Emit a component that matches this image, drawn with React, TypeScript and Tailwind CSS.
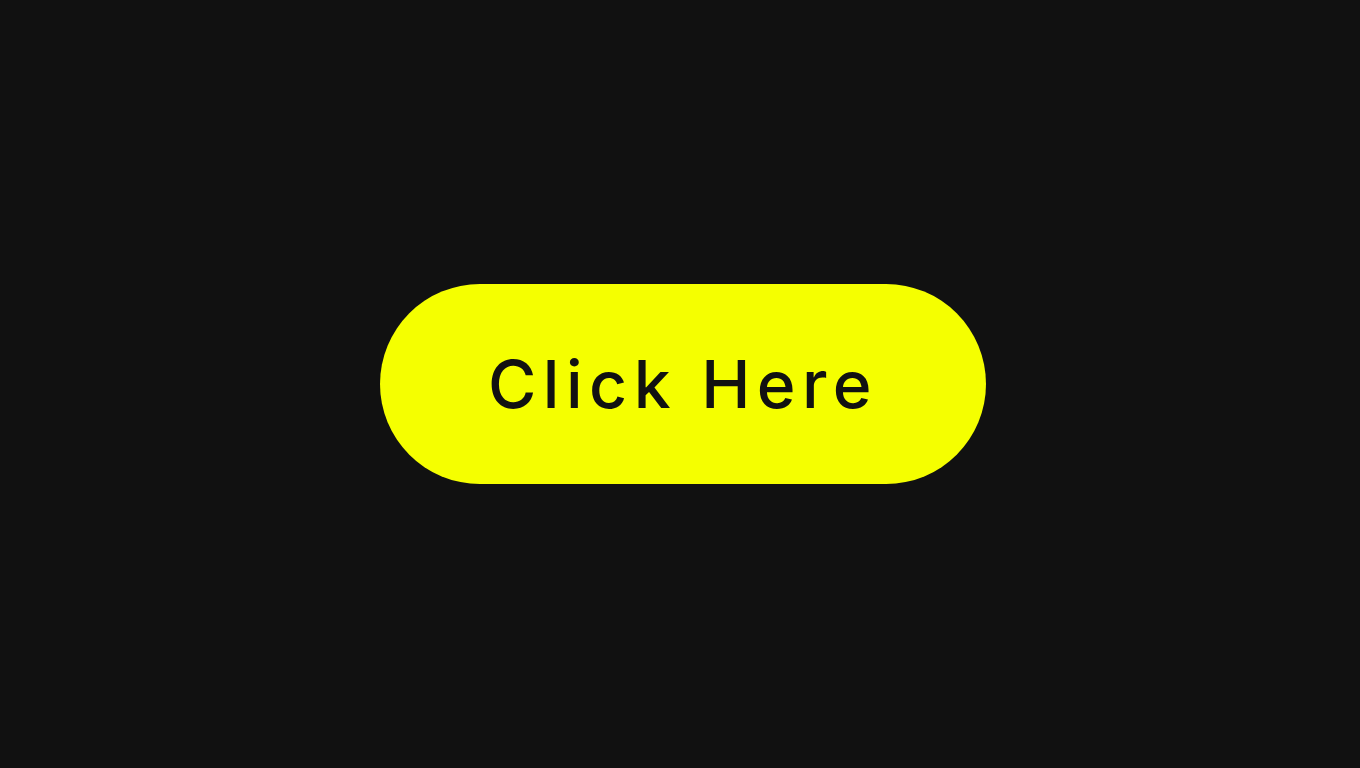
export default function App() {
  return (
    <div className="min-h-screen w-full bg-[#111111] flex items-center justify-center">
      <button
        type="button"
        className="ml-[6px] w-[606px] h-[200px] rounded-full bg-[#f5ff00] text-[#111111] flex items-center justify-center font-['Inter',sans-serif] font-medium text-[66px] tracking-[6.5px] leading-none"
      >
        Click Here
      </button>
    </div>
  );
}
